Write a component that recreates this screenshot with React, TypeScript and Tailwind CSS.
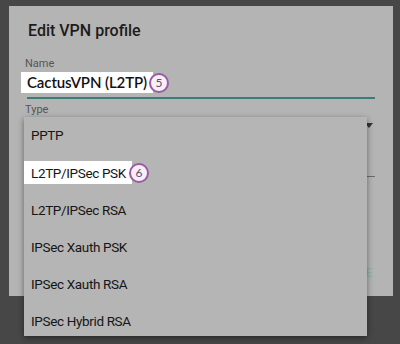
export default function App() {
  const items = ["PPTP", "L2TP/IPSec PSK", "L2TP/IPSec RSA", "IPSec Xauth PSK", "IPSec Xauth RSA", "IPSec Hybrid RSA"];

  return (
    <div className="relative w-[400px] h-[344px] overflow-hidden bg-[#474747] pt-[6px] pl-[9px] font-['Roboto',sans-serif]">
      {/* dialog */}
      <div className="w-[384px] h-[290px] bg-[#b4b4b4] pt-[15px] flex flex-col">
        <div className="pl-[19px] h-[20px] leading-[20px] text-[16px] font-medium text-[#1c1c1c]">Edit VPN profile</div>

        <div className="pl-[16px] mt-[16px] h-[14px] leading-[14px] text-[11px] text-[#555]">Name</div>
        <div className="pl-[12px] mt-[1px] flex items-center">
          <span className="h-[21px] bg-white pl-[6px] pr-[6px] flex items-center text-[15px] font-semibold text-[#111] font-['Lato',sans-serif] tracking-[-0.1px]">CactusVPN (L2TP)</span>
          <Badge n="5" className="-ml-[4px]" />
        </div>
        <div className="ml-[18px] mr-[18px] mt-[4px] h-[2px] bg-[#3a7c77]"></div>

        <div className="pl-[16px] mt-[4px] h-[14px] leading-[14px] text-[11px] text-[#555]">Type</div>
        <div className="flex justify-end pr-[20px] mt-[6px]">
          <div className="w-0 h-0 border-l-[4px] border-r-[4px] border-t-[5px] border-l-transparent border-r-transparent border-t-[#333]"></div>
        </div>
        <div className="ml-[16px] mr-[18px] mt-[48px] h-[1px] bg-[#6a6a6a]"></div>

        <div className="flex-1"></div>
        <div className="flex justify-end pr-[20px] pb-[14px]">
          <span className="text-[13px] font-medium tracking-wide text-[#8fb2a9]">SAVE</span>
        </div>
      </div>

      {/* spinner dropdown */}
      <div className="absolute left-[24px] top-[117px] w-[343px] h-[219px] overflow-hidden bg-[#b5b5b5] shadow-[0_2px_6px_rgba(0,0,0,0.45)]">
        {items.map((t, i) => (
          <div key={t} className="h-[37.2px] flex items-center text-[13.5px] tracking-[-0.35px] text-[#161616]">
            {i === 1 ? (
              <div className="flex items-center">
                <span className="h-[23px] bg-white pl-[7px] pr-[6px] flex items-center">{t}</span>
                <Badge n="6" className="-ml-[3px]" />
              </div>
            ) : (
              <span className="pl-[7px]">{t}</span>
            )}
          </div>
        ))}
      </div>
    </div>
  );
}

function Badge({ n, className }: { n: string; className?: string }) {
  return (
    <span className={"w-[20px] h-[20px] rounded-full border-2 border-[#9b5aa6] bg-[#f6eff6] flex items-center justify-center text-[12px] tracking-normal text-[#6b4a70] font-['Lato',sans-serif] " + (className ?? "")}>
      {n}
    </span>
  );
}
